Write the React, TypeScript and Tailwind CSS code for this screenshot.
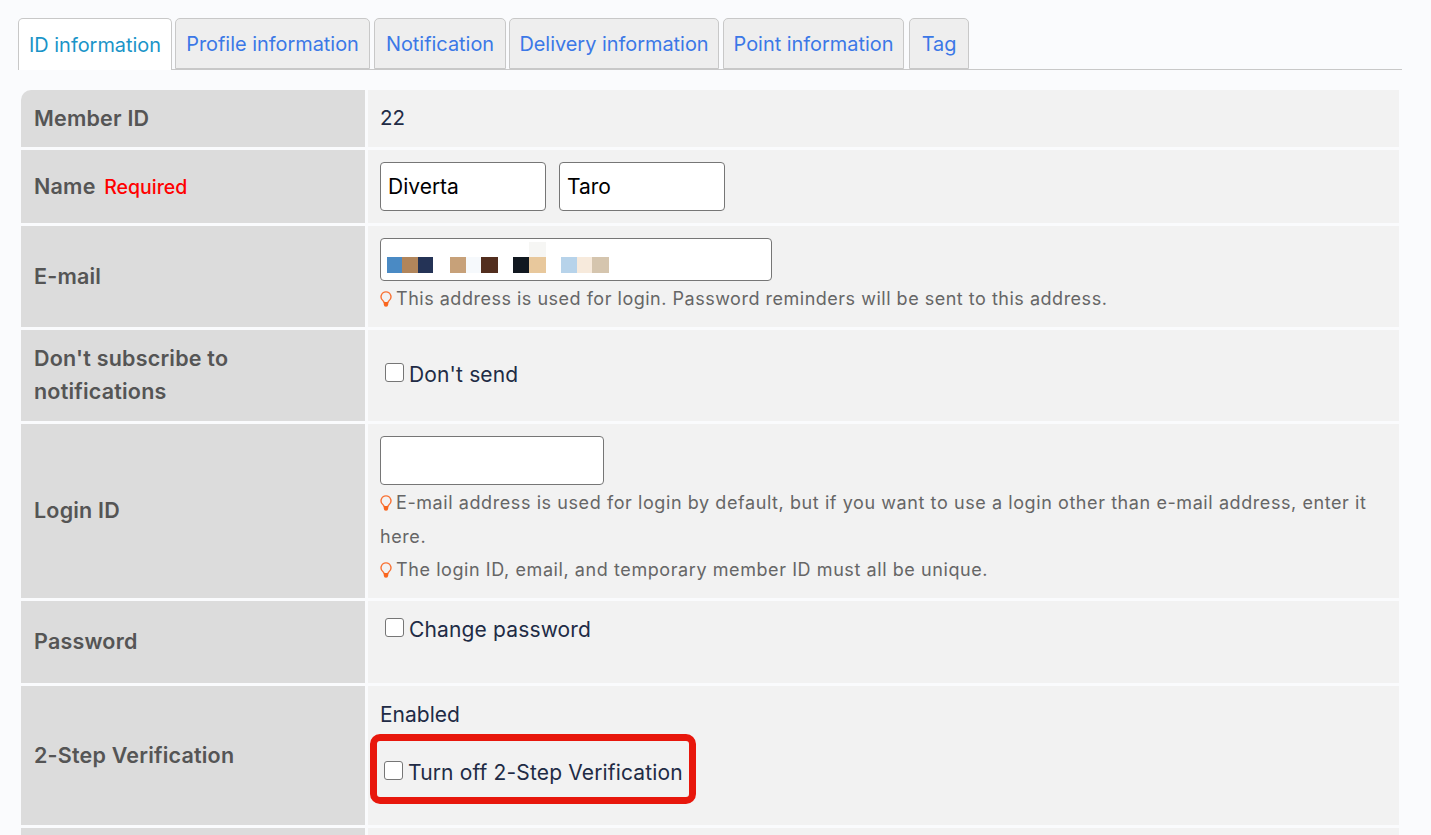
import { ReactNode } from "react";

const FONT = "font-['Inter','Liberation_Sans',sans-serif]";

const tabs = [
  { label: "ID information", w: "w-[154px]" },
  { label: "Profile information", w: "w-[195px]" },
  { label: "Notification", w: "w-[132px] ml-[1px]" },
  { label: "Delivery information", w: "w-[210px]" },
  { label: "Point information", w: "w-[181px] ml-[1px]" },
  { label: "Tag", w: "w-[60px] ml-[2px]" },
];

const swatches = [
  { w: 15, c: "bg-[#4a8ac4]" },
  { w: 16, c: "bg-[#b1855b]" },
  { w: 15, c: "bg-[#243356]" },
  { w: 17, c: "bg-white" },
  { w: 16, c: "bg-[#c7a179]" },
  { w: 15, c: "bg-[#f6f9fc]" },
  { w: 17, c: "bg-[#522e1e]" },
  { w: 15, c: "bg-white" },
  { w: 16, c: "bg-[#111820]" },
  { w: 17, c: "bg-[#e8c89c]" },
  { w: 15, c: "bg-white" },
  { w: 16, c: "bg-[#b7d3ea]" },
  { w: 15, c: "bg-[#f7eadc]" },
  { w: 17, c: "bg-[#d5c5ae]" },
];

const Bulb = () => (
  <svg viewBox="0 0 12 16" className="inline-block w-[12px] h-[16px] mr-[4px] align-[-2px]">
    <path
      d="M6 .9a4.9 4.9 0 0 0-3 8.8c.7.6 1.1 1.2 1.1 1.9h3.8c0-.7.4-1.3 1.1-1.9A4.9 4.9 0 0 0 6 .9Z"
      fill="none"
      stroke="#f97234"
      strokeWidth="1.4"
    />
    <path d="M3.8 11h4.4v2.6a2.2 2.2 0 0 1-4.4 0Z" fill="#f9661f" />
  </svg>
);

const Hint = ({ children, track = "tracking-[0.58px]" }: { children: ReactNode; track?: string }) => (
  <p className={`text-[18px] ${track} leading-[33.5px] text-[#666666]`}>
    <Bulb />
    {children}
  </p>
);

const Check = ({ label, tight }: { label: string; tight?: boolean }) => (
  <label
    className={`flex items-center text-[21px] tracking-[0.15px] text-[#212b45] ${tight ? "" : "ml-[5px]"}`}
  >
    <span className="w-[19px] h-[19px] mr-[5px] rounded-[3px] border border-[#767676] bg-white -mt-[5px]" />
    {label}
  </label>
);

const Row = ({
  label,
  children,
  h,
  align = "items-center",
}: {
  label: ReactNode;
  children: ReactNode;
  h: string;
  align?: string;
}) => (
  <div className={`flex gap-[3px] ${h}`}>
    <div className="w-[344px] shrink-0 bg-[#dcdcdc] flex items-center pl-[13px] pr-[13px] pb-[1px] text-[21.5px] tracking-[0.2px] leading-[33px] font-semibold text-[#555555]">
      <div>{label}</div>
    </div>
    <div className={`flex-1 bg-[#f2f2f2] px-[12px] flex ${align}`}>{children}</div>
  </div>
);

export default function App() {
  return (
    <div className={`${FONT} w-[1431px] h-[835px] overflow-hidden bg-[#fafbfd] pt-[18px] pl-[18px]`}>
      {/* tabs */}
      <div className="w-[1384px] h-[52px] flex gap-[3px] border-b border-[#c8c8c8]">
        {tabs.map((t, i) => (
          <div
            key={t.label}
            className={
              i === 0
                ? `${t.w} h-[52px] pt-[2px] flex items-center justify-center rounded-t-[5px] border border-b-0 border-[#c8c8c8] bg-white text-[19.9px] text-[#1a94c8]`
                : `${t.w} h-[51px] pt-[2px] flex items-center justify-center rounded-t-[5px] border border-[#c8c8c8] bg-[#eeeeee] text-[19.9px] text-[#3b78e7]`
            }
          >
            {t.label}
          </div>
        ))}
      </div>

      {/* member table */}
      <div className="mt-[20px] ml-[3px] w-[1378px] flex flex-col gap-[3px]">
        <div className="rounded-tl-[10px] overflow-hidden">
          <Row label="Member ID" h="h-[57px]">
            <span className="text-[20.5px] text-[#212b45]">22</span>
          </Row>
        </div>

        <Row
          label={
            <div className="pt-[2px]">
              Name <span className="ml-[3px] text-[19.5px] tracking-normal font-medium text-[#ff0000]">Required</span>
            </div>
          }
          h="h-[73px]"
        >
          <div className="flex gap-[13px]">
            {["Diverta", "Taro"].map((v) => (
              <div
                key={v}
                className="w-[166px] h-[49px] px-[7px] flex items-center rounded-[4px] border border-[#767676] bg-white text-[21px] text-black"
              >
                {v}
              </div>
            ))}
          </div>
        </Row>

        <Row label="E-mail" h="h-[101px]" align="items-start">
          <div className="pt-[12px]">
            <div className="w-[392px] h-[43px] pl-[6px] flex items-start pt-[18px] rounded-[4px] border border-[#767676] bg-white relative">
              {swatches.map((s, i) => (
                <div key={i} style={{ width: s.w }} className={`h-[16px] ${s.c}`} />
              ))}
              <div className="absolute left-[148px] top-[3px] w-[17px] h-[15px] bg-[#f6f6f4]" />
            </div>
            <div className="mt-[1px]">
              <Hint track="tracking-[0.51px]">
                This address is used for login. Password reminders will be sent to this address.
              </Hint>
            </div>
          </div>
        </Row>

        <Row
          label={
            <>
              Don't subscribe to
              <br />
              notifications
            </>
          }
          h="h-[91px]"
        >
          <div className="pb-[2px]">
            <Check label="Don't send" />
          </div>
        </Row>

        <Row label="Login ID" h="h-[174px]" align="items-start">
          <div className="pt-[12px]">
            <div className="w-[224px] h-[49px] rounded-[4px] border border-[#767676] bg-white mb-[1px]" />
            <Hint>
              E-mail address is used for login by default, but if you want to use a login other than e-mail address,
              enter it here.
            </Hint>
            <Hint>The login ID, email, and temporary member ID must all be unique.</Hint>
          </div>
        </Row>

        <Row label="Password" h="h-[82px]" align="items-start">
          <div className="pt-[13px]">
            <Check label="Change password" />
          </div>
        </Row>

        <Row label="2-Step Verification" h="h-[139px]" align="items-start">
          <div className="pt-[13px]">
            <p className="text-[21px] leading-[32px] text-[#212b45]">Enabled</p>
            <div className="mt-[3px] -ml-[10px] w-[326px] h-[70px] pt-[7px] pl-[7px] flex items-center rounded-[10px] border-[7px] border-[#e8170c]">
              <Check label="Turn off 2-Step Verification" tight />
            </div>
          </div>
        </Row>

        <Row label="" h="h-[40px]">
          <span />
        </Row>
      </div>
    </div>
  );
}
